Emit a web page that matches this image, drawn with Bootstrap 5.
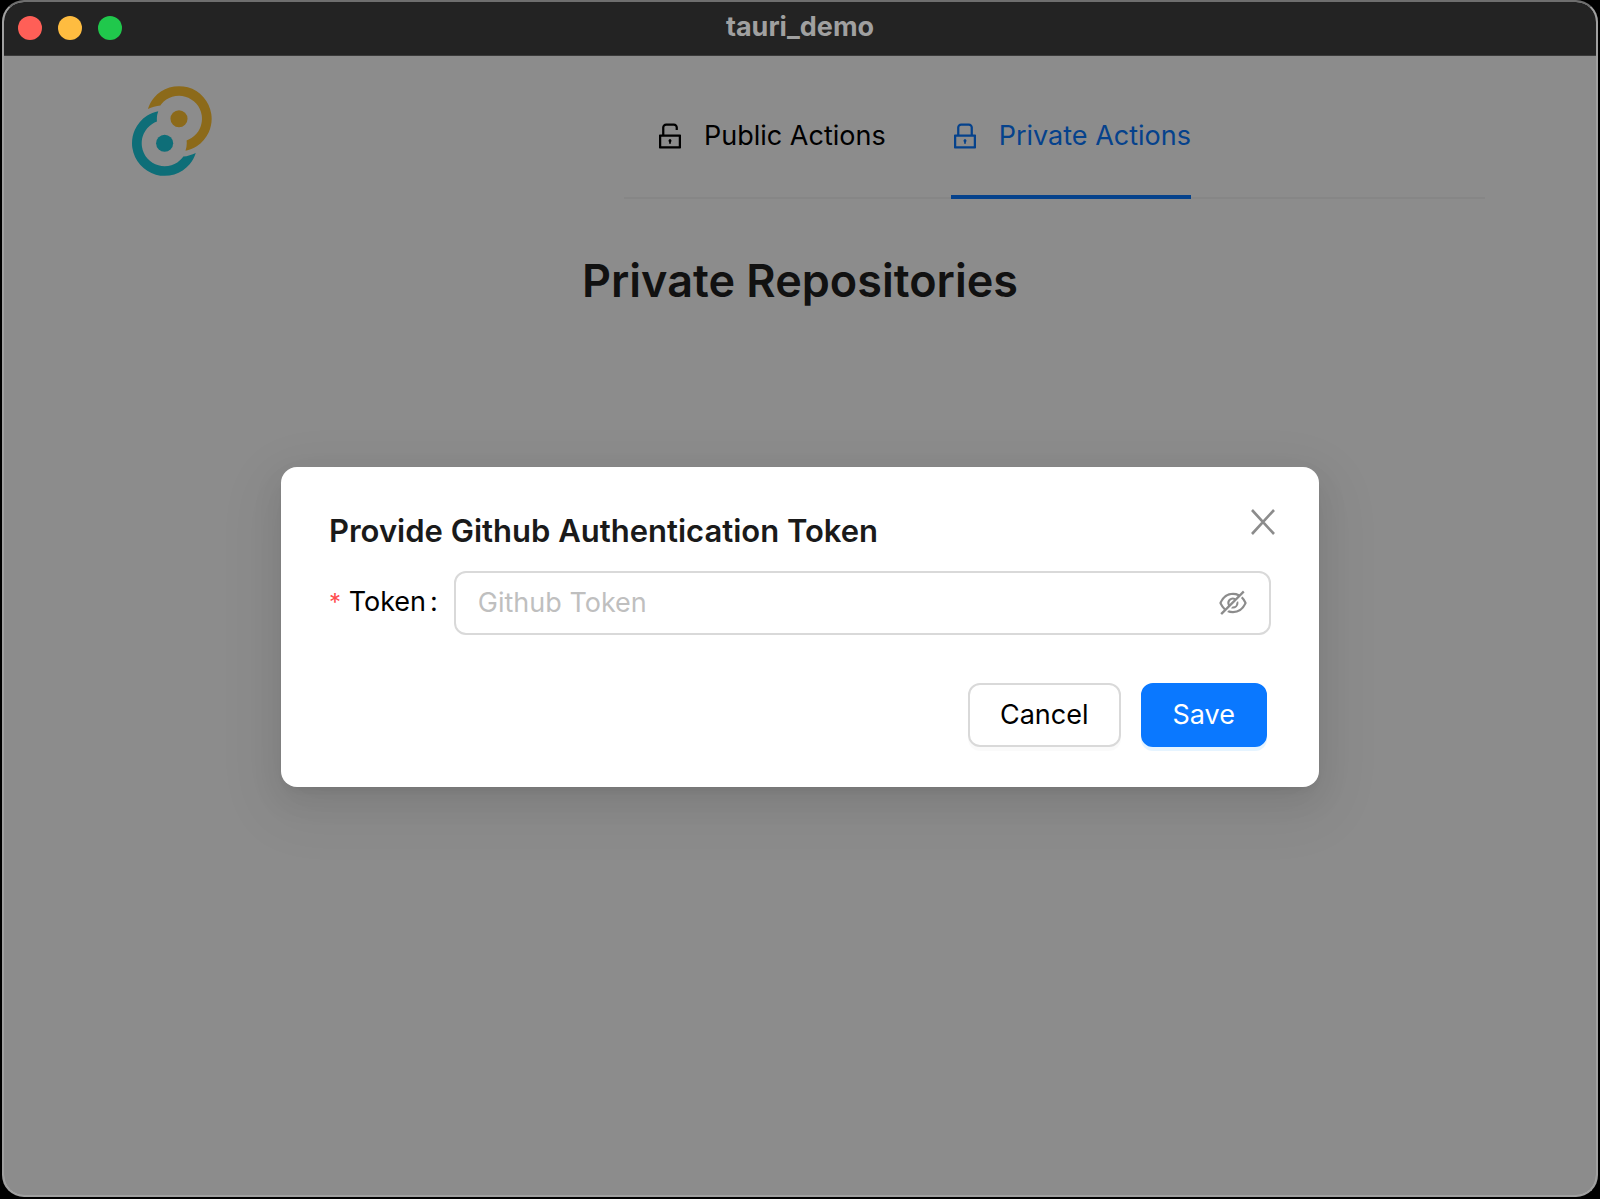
<!DOCTYPE html>
<html lang="en">
<head>
<meta charset="utf-8">
<meta name="viewport" content="width=device-width, initial-scale=1">
<title>tauri_demo</title>
<link rel="stylesheet" href="https://cdn.jsdelivr.net/npm/bootstrap@5.3.0/dist/css/bootstrap.min.css">
<script src="https://cdn.jsdelivr.net/npm/bootstrap@5.3.0/dist/js/bootstrap.bundle.min.js"></script>
<style>
  body { background: #000; font-family: Inter, "Liberation Sans", sans-serif; font-size: 27px; line-height: 44px; color: #000; }
  svg { fill: currentColor; flex: none; display: block; }
  .app-window { border-radius: 22px; border: 2px solid #a0a0a0; border-top-color: #6e6e6e; background: #fff; }
  .app-frame { height: 100vh; padding: 0 2px 2px; }
  .titlebar { height: 54px; background: #232323; border-bottom: 1px solid #3a3a3a; padding: 0 14px; }
  .titlebar h1 { font-size: 27px; line-height: 48px; font-weight: 700; color: #a0a0a0; padding-bottom: 4px; }
  .lights { gap: 16px; width: 104px; padding-bottom: 2px; }
  .lights button { width: 24px; height: 24px; border: 0; padding: 0; border-radius: 50%; }
  .light-close { background: #ff5f57; }
  .light-min { background: #febc40; }
  .light-zoom { background: #20c84c; }
  .app-header { padding: 30px 111px 0 128px; }
  .app-menu { width: 861px; height: 113px; padding: 0 32px; gap: 65px; border-bottom: 2px solid #f4f4f4; }
  .app-menu .nav-link { padding: 28px 0 0; height: 113px; color: #000; border-bottom: 4px solid transparent; gap: 20px; }
  .app-menu .nav-link.active { color: #0a78ff; border-color: #0a78ff; }
  .app-menu svg { margin-top: 8px; }
  .page-heading { font-size: 45px; line-height: 60px; font-weight: 600; color: #1f1f1f; padding-top: 52px; }
  .dim { background: rgba(0, 0, 0, .45); padding-top: 2px; }
  .token-dialog { width: 90%; max-width: 1038px; }
  .token-dialog .modal-content { background: #fff; border: 0; border-radius: 16px; padding: 40px 48px; box-shadow: 0 12px 32px rgba(0,0,0,.08), 0 6px 12px -8px rgba(0,0,0,.12), 0 18px 56px 16px rgba(0,0,0,.05); }
  .token-dialog h3 { font-size: 31px; line-height: 48px; font-weight: 600; color: #1a1a1a; }
  .close-x { top: 33px; right: 34px; width: 44px; height: 44px; border: 0; background: none; color: #8c8c8c; padding: 7px; }
  .token-row { margin-top: 16px; gap: 16px; }
  .req { color: #ff4d4f; font-size: 24px; }
  .token-box { height: 64px; border: 2px solid #d9d9d9; border-radius: 12px; padding: 0 22px; }
  .token-box input { border: 0; outline: 0; font-size: 27px; background: none; padding: 0; min-width: 0; }
  .token-box input::placeholder { color: #bfbfbf; opacity: 1; }
  .token-box button { border: 0; background: none; padding: 0; color: #8c8c8c; }
  .dialog-actions { margin-top: 48px; gap: 20px; padding-right: 4px; }
  .dialog-actions .btn { height: 64px; border-radius: 12px; border-width: 2px; font-size: 27px; line-height: 44px; padding: 0 30px; }
  .btn-plain { background: #fff; border-color: #d9d9d9; color: #000; box-shadow: 0 4px 0 rgba(0,0,0,.02); }
  .btn-save { background: #0a78ff; border-color: #0a78ff; color: #fff; box-shadow: 0 4px 0 rgba(5,145,255,.1); }
</style>
</head>
<body>
<div class="app-frame">
  <div class="app-window h-100 overflow-hidden d-flex flex-column">
    <header class="titlebar d-flex align-items-center">
      <div class="lights d-flex">
        <button type="button" class="light-close" aria-label="Close window"></button>
        <button type="button" class="light-min" aria-label="Minimize window"></button>
        <button type="button" class="light-zoom" aria-label="Zoom window"></button>
      </div>
      <h1 class="flex-grow-1 text-center m-0">tauri_demo</h1>
      <div class="lights"></div>
    </header>
    <main class="flex-grow-1 position-relative">
      <div class="app-header d-flex align-items-start justify-content-between">
        <svg width="80" height="90" viewBox="0 0 206 231" role="img" aria-label="Tauri">
          <g fill="#ffc131">
            <circle cx="121" cy="84" r="22"/>
            <path fill-rule="evenodd" d="M166.738 154.548C157.86 160.286 148.023 164.269 137.757 166.341C139.858 160.282 141 153.774 141 147C141 144.543 140.85 142.121 140.558 139.743C144.975 138.204 149.215 136.139 153.183 133.575C162.73 127.404 170.292 118.608 174.961 108.244C179.63 97.88 181.207 86.388 179.502 75.149C177.798 63.91 172.884 53.402 165.352 44.888C157.82 36.374 147.99 30.217 137.042 27.155C126.095 24.093 114.496 24.257 103.64 27.627C92.784 30.998 83.132 37.432 75.844 46.155C74.91 47.273 74.021 48.422 73.176 49.599C61.929 50.849 51.036 54.032 40.963 58.956C44.242 48.459 49.565 38.659 56.679 30.144C67.051 17.73 80.786 8.574 96.235 3.778C111.685 -1.019 128.19 -1.253 143.769 3.105C159.348 7.462 173.337 16.225 184.056 28.341C194.775 40.457 201.767 55.41 204.193 71.404C206.619 87.398 204.374 103.752 197.73 118.501C191.086 133.25 180.324 145.767 166.738 154.548Z"/>
          </g>
          <g fill="#1ac8db">
            <circle cx="84" cy="147" r="22"/>
            <path d="M38.405 76.452C47.349 70.671 57.268 66.671 67.617 64.613C65.277 70.967 64 77.834 64 85C64 87.143 64.114 89.26 64.337 91.344C60.009 92.873 55.853 94.909 51.96 97.426C42.413 103.596 34.851 112.392 30.182 122.756C25.513 133.12 23.936 144.612 25.64 155.851C27.345 167.09 32.258 177.598 39.791 186.112C47.323 194.626 57.153 200.784 68.1 203.846C79.048 206.907 90.646 206.743 101.502 203.373C112.359 200.002 122.011 193.568 129.299 184.845C130.237 183.722 131.131 182.567 131.979 181.383C143.235 180.114 154.132 176.91 164.205 171.962C160.929 182.49 155.596 192.319 148.464 200.856C138.092 213.27 124.357 222.426 108.907 227.222C93.458 232.019 76.952 232.253 61.374 227.895C45.795 223.538 31.806 214.775 21.087 202.659C10.368 190.543 3.376 175.59 .95 159.596C-1.476 143.602 .768 127.248 7.412 112.499C14.057 97.75 24.818 85.233 38.405 76.452Z"/>
          </g>
        </svg>
        <nav class="app-menu nav flex-nowrap">
          <a href="#public" class="nav-link d-flex align-items-start">
            <svg width="28" height="28" viewBox="64 64 896 896" aria-hidden="true"><path d="M832 464H332V240c0-30.9 25.1-56 56-56h248c30.9 0 56 25.1 56 56v68c0 4.4 3.6 8 8 8h56c4.4 0 8-3.6 8-8v-68c0-70.7-57.3-128-128-128H388c-70.7 0-128 57.3-128 128v224h-68c-17.7 0-32 14.3-32 32v384c0 17.7 14.3 32 32 32h640c17.7 0 32-14.3 32-32V496c0-17.7-14.3-32-32-32zm-40 376H232V536h560v304zM484 701v53c0 4.4 3.6 8 8 8h40c4.4 0 8-3.6 8-8v-53a48.01 48.01 0 10-56 0z"/></svg>
            <span>Public Actions</span>
          </a>
          <a href="#private" class="nav-link active d-flex align-items-start" aria-current="page">
            <svg width="28" height="28" viewBox="64 64 896 896" aria-hidden="true"><path d="M832 464h-68V240c0-70.7-57.3-128-128-128H388c-70.7 0-128 57.3-128 128v224h-68c-17.7 0-32 14.3-32 32v384c0 17.7 14.3 32 32 32h640c17.7 0 32-14.3 32-32V496c0-17.7-14.3-32-32-32zM332 240c0-30.9 25.1-56 56-56h248c30.9 0 56 25.1 56 56v224H332V240zm460 600H232V536h560v304zM484 701v53c0 4.4 3.6 8 8 8h40c4.4 0 8-3.6 8-8v-53a48.01 48.01 0 10-56 0z"/></svg>
            <span>Private Actions</span>
          </a>
        </nav>
      </div>
      <h2 class="page-heading text-center m-0">Private Repositories</h2>

      <div class="dim position-absolute top-0 start-0 w-100 h-100 d-flex align-items-center justify-content-center">
        <div class="token-dialog" role="dialog" aria-modal="true" aria-labelledby="dialogTitle">
          <form class="modal-content position-relative">
            <button type="button" class="close-x position-absolute" aria-label="Close">
              <svg width="30" height="30" viewBox="0 0 30 30" aria-hidden="true"><path d="M4 3L26 27M26 3L4 27" fill="none" stroke="currentColor" stroke-width="2.6"/></svg>
            </button>
            <h3 class="m-0" id="dialogTitle">Provide Github Authentication Token</h3>
            <div class="token-row d-flex align-items-center">
              <label for="token" class="text-nowrap"><span class="req">*</span> Token<span class="ps-1">:</span></label>
              <div class="token-box d-flex align-items-center flex-grow-1">
                <input type="password" id="token" class="flex-grow-1" placeholder="Github Token">
                <button type="button" aria-label="Show token">
                  <svg width="28" height="28" viewBox="64 64 896 896" aria-hidden="true"><path d="M942.2 486.2Q889.47 375.11 816.7 305l-50.88 50.88C807.31 395.53 843.45 447.4 874.7 512 791.5 684.2 673.4 766 512 766q-72.67 0-133.87-22.38L323 798.75Q408 838 512 838q288.3 0 430.2-300.3a60.29 60.29 0 000-51.5zm-63.57-320.64L836 122.88a8 8 0 00-11.32 0L715.31 232.2Q624.86 186 512 186q-288.3 0-430.2 300.3a60.3 60.3 0 000 51.5q56.69 119.4 136.5 191.41L112.48 835a8 8 0 000 11.31L155.17 889a8 8 0 0011.31 0l712.15-712.12a8 8 0 000-11.32zM149.3 512C232.6 339.8 350.7 258 512 258c54.54 0 104.13 9.36 149.12 28.39l-70.3 70.3a176 176 0 00-238.13 238.13l-83.42 83.42C223.1 637.49 183.3 582.28 149.3 512zm246.7 0a112.11 112.11 0 01146.2-106.69L401.31 546.2A112 112 0 01396 512z"/><path d="M508 624c-3.46 0-6.87-.16-10.25-.47l-52.82 52.82a176.09 176.09 0 00227.42-227.42l-52.82 52.82c.31 3.38.47 6.79.47 10.25a111.94 111.94 0 01-112 112z"/></svg>
                </button>
              </div>
            </div>
            <div class="dialog-actions d-flex justify-content-end">
              <button type="button" class="btn btn-plain">Cancel</button>
              <button type="submit" class="btn btn-save">Save</button>
            </div>
          </form>
        </div>
      </div>
    </main>
  </div>
</div>
</body>
</html>
